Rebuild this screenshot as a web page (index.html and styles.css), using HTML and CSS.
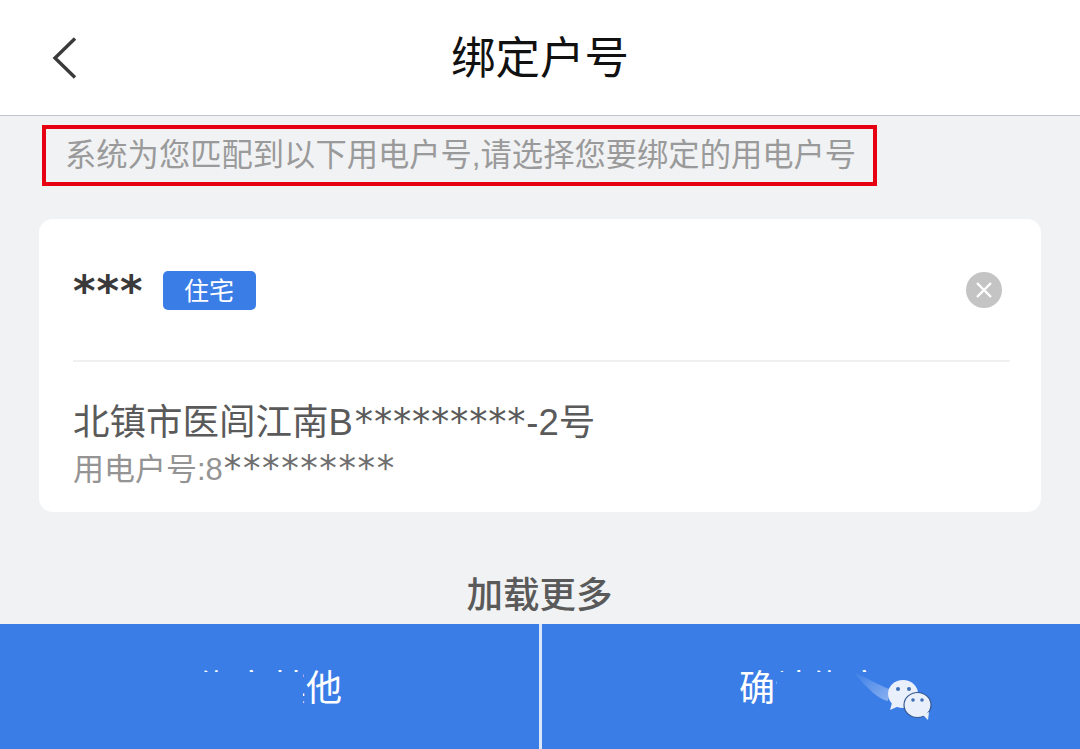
FILE: index.html
```html
<!DOCTYPE html>
<html lang="zh-CN">
<head>
<meta charset="utf-8">
<title>绑定户号</title>
<link rel="stylesheet" href="styles.css">
</head>
<body>
<div class="page">
  <header class="topbar">
    <svg class="back" width="26" height="44" viewBox="0 0 26 44"><path d="M23 2.500 3 22l20 19.500" fill="none" stroke="#3a3a3a" stroke-width="3.400"/></svg>
    <h1 class="title">绑定户号</h1>
  </header>
  <div class="notice">系统为您匹配到以下用电户号,请选择您要绑定的用电户号</div>
  <section class="card">
    <div class="card-head">
      <span class="name">***</span>
      <span class="tag">住宅</span>
      <svg class="close" width="36" height="36" viewBox="0 0 36 36"><circle cx="18" cy="18" r="18" fill="#c4c4c4"/><path d="M11 11l14 14M25 11l-14 14" stroke="#fff" stroke-width="2.400"/></svg>
    </div>
    <div class="card-body">
      <div class="address">北镇市医闾江南B<span class="stars">*********</span>-2号</div>
      <div class="account">用电户号:8<span class="stars-small">*********</span></div>
    </div>
  </section>
  <div class="more">加载更多</div>
  <footer class="actions">
    <div class="action action-left">绑定其他<span class="mask mask-left"></span></div>
    <div class="action action-right">确认绑定<span class="mask mask-right"></span></div>
    <svg class="mark" width="160" height="70" viewBox="0 0 160 70">
      <defs>
        <linearGradient id="streak" x1="0" y1="0" x2="1" y2="1">
          <stop offset="0" stop-color="#fff" stop-opacity="0"/>
          <stop offset="1" stop-color="#fff" stop-opacity=".4"/>
        </linearGradient>
      </defs>
      <path d="M37 9C50 14 62 22 73 26L72 38C62 36 52 26 37 9Z" fill="url(#streak)"/>
      <ellipse cx="87" cy="31" rx="15" ry="14" fill="#e9f0fb"/>
      <path d="M76 40l-2 7 9-4z" fill="#e9f0fb"/>
      <ellipse cx="101.500" cy="42" rx="13.500" ry="12.500" fill="#e9f0fb" stroke="#33588f" stroke-width="1.200"/>
      <path d="M107 52l5 5 1-8z" fill="#e9f0fb"/>
      <circle cx="82" cy="26" r="2" fill="#3f6fb5"/><circle cx="93" cy="26" r="2" fill="#3f6fb5"/>
      <circle cx="97" cy="37" r="1.800" fill="#3f6fb5"/><circle cx="106" cy="37" r="1.800" fill="#3f6fb5"/>
    </svg>
  </footer>
</div>
</body>
</html>
```
FILE: styles.css
```css
* { box-sizing: border-box; }
html, body { margin: 0; padding: 0; }
body {
  width: 1080px;
  height: 749px;
  overflow: hidden;
  font-family: "Liberation Sans", "Noto Sans CJK SC", sans-serif;
}
.page {
  display: flex;
  flex-direction: column;
  height: 749px;
  background: #f1f2f4;
}
.topbar {
  position: relative;
  flex: none;
  height: 116px;
  display: flex;
  align-items: center;
  justify-content: center;
  background: #fff;
  border-bottom: 1px solid #bfc3cf;
}
.back { position: absolute; left: 52px; top: 36px; }
.title {
  margin: 2px 0 0;
  font-size: 44.500px;
  font-weight: 400;
  line-height: 60px;
  color: #111;
}
.notice {
  flex: none;
  align-self: flex-start;
  width: 835px;
  height: 61px;
  margin: 9px 0 0 42px;
  padding-left: 19px;
  border: 4px solid #e60012;
  font-size: 31.300px;
  line-height: 53px;
  color: #9a9a9a;
  white-space: nowrap;
}
.card {
  flex: none;
  width: 1002px;
  height: 293px;
  margin: 33px 0 0 39px;
  padding: 0 31px 0 34px;
  background: #fff;
  border-radius: 14px;
}
.card-head {
  display: flex;
  align-items: center;
  height: 143px;
  border-bottom: 2px solid #f0f0f0;
}
.name {
  width: 90px;
  padding-top: 3px;
  font-family: "DejaVu Sans", sans-serif;
  font-size: 43px;
  font-weight: 700;
  line-height: 50px;
  letter-spacing: 1px;
  color: #3a3a3a;
}
.tag {
  width: 93px;
  height: 39px;
  margin-top: 1px;
  background: #3b7de6;
  border-radius: 5px;
  color: #fff;
  font-size: 25px;
  line-height: 41px;
  text-indent: -1px;
  text-align: center;
}
.close { margin-left: auto; margin-right: 8px; }
.card-body { padding-top: 38px; }
.address {
  font-size: 36.500px;
  line-height: 46px;
  color: #5a5a5a;
  white-space: nowrap;
}
.stars {
  font-family: "DejaVu Sans", sans-serif;
  letter-spacing: 0.800px;
  margin-left: 2px;
}
.stars-small {
  font-family: "DejaVu Sans", sans-serif;
  font-size: 35px;
  line-height: 1;
  letter-spacing: 1.600px;
  margin-left: 1px;
  color: #6f6f6f;
}
.account {
  margin-top: 1px;
  font-size: 31px;
  line-height: 46px;
  color: #949494;
  white-space: nowrap;
}
.more {
  flex: none;
  margin-top: 57px;
  height: 55px;
  padding-right: 1px;
  font-size: 36.500px;
  line-height: 54px;
  font-weight: 500;
  text-align: center;
  color: #5a5a5a;
}
.actions {
  position: relative;
  flex: 1;
  display: grid;
  grid-template-columns: 539px 1fr;
  column-gap: 3px;
  background: #dbe6f8;
}
.action {
  position: relative;
  background: #3b7de6;
  color: #fff;
  font-size: 36px;
  line-height: 130px;
  white-space: nowrap;
}
.action-left { padding-left: 198px; }
.action-right { padding-left: 197px; }
.mask { position: absolute; background: #3b7de6; }
.mask-left { left: 185px; top: 48px; width: 118px; height: 62px; }
.mask-right { left: 235px; top: 48px; width: 122px; height: 62px; }
.mark { position: absolute; left: 816px; top: 39px; }
```
